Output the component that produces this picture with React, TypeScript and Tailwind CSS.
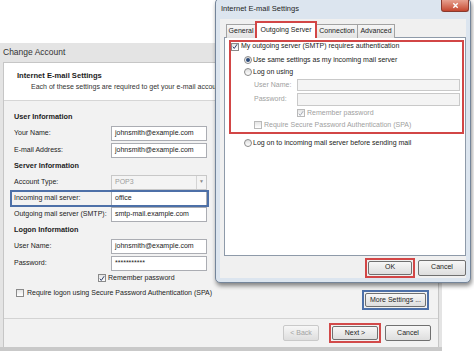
import type { ReactNode } from "react";

function Check({ checked, disabled }: { checked?: boolean; disabled?: boolean }) {
  return (
    <span
      className={`flex h-[8px] w-[8px] shrink-0 items-center justify-center border bg-linear-to-b from-[#e4e4e4] to-white ${
        disabled ? "border-[#b9b9b9]" : "border-[#8a8a8a]"
      }`}
    >
      {checked && (
        <svg viewBox="0 0 8 8" className="h-[7px] w-[7px]">
          <path
            d="M1.2 4.2 L3 6.6 L6.8 1"
            fill="none"
            stroke={disabled ? "#a3aab5" : "#2a3d68"}
            strokeWidth="1.3"
          />
        </svg>
      )}
    </span>
  );
}

function Radio({ on }: { on?: boolean }) {
  return (
    <span className="flex h-[8px] w-[8px] shrink-0 items-center justify-center rounded-full border border-[#8a8a8a] bg-linear-to-b from-[#dedede] to-white">
      {on && <span className="h-[4px] w-[4px] rounded-full bg-[#2b4a78]" />}
    </span>
  );
}

function Btn({ children, className }: { children: ReactNode; className: string }) {
  return (
    <div
      className={`flex items-center justify-center rounded-[2px] border border-[#707070] bg-linear-to-b from-[#f7f7f7] to-[#dedede] text-[7px] text-[#1e1e1e] ${className}`}
    >
      {children}
    </div>
  );
}

function Field({ label, value, h = "h-[17px]" }: { label: string; value: string; h?: string }) {
  return (
    <div className={`flex items-center ${h}`}>
      <span className="w-[97px] shrink-0">{label}</span>
      <div className="flex h-[15px] w-[96px] items-center border border-[#abadb3] bg-white pl-[3px] text-[7px]">
        {value}
      </div>
    </div>
  );
}

function Heading({ children, h }: { children: ReactNode; h: string }) {
  return <div className={`flex items-center font-bold text-[7.3px] ${h}`}>{children}</div>;
}

export default function App() {
  return (
    <div
      className="relative h-[351px] w-[474px] overflow-hidden bg-white text-[7px] text-[#222]"
      style={{ fontFamily: '"Liberation Sans", Arial, sans-serif' }}
    >
      {/* Change Account window */}
      <div className="absolute left-0 top-[43px] flex h-[308px] w-[442px] flex-col bg-[#e4e4e4]">
        <div className="flex h-[19px] items-center pl-[3px] text-[8.5px] text-[#333]">Change Account</div>
        <div className="mx-[3px] flex flex-1 flex-col border-l border-r border-t border-[#c6c6c6] bg-[#f2f2f2]">
          <div className="flex h-[38px] flex-col justify-center border-b border-[#d6d6d6] bg-white pl-[13px]">
            <div className="text-[7.6px] font-bold text-[#1c1c1c]">Internet E-mail Settings</div>
            <div className="pl-[14px] pt-[1px] text-[7px] text-[#333]">
              Each of these settings are required to get your e-mail account working.
            </div>
          </div>

          <div className="flex flex-col pl-[10px] pt-[8px]">
            <Heading h="h-[16px]">User Information</Heading>
            <Field label="Your Name:" value="johnsmith@example.com" />
            <Field label="E-mail Address:" value="johnsmith@example.com" />
            <Heading h="h-[15px]">Server Information</Heading>
            <div className="flex h-[16px] items-center">
              <span className="w-[97px] shrink-0">Account Type:</span>
              <div className="flex h-[15px] w-[96px] items-center justify-between border border-[#c8c8c8] bg-[#f4f4f4] pl-[3px] text-[#9d9d9d]">
                <span>POP3</span>
                <span className="flex h-[13px] w-[10px] items-center justify-center border-l border-[#d4d4d4] text-[5px] text-[#8a8a8a]">
                  ▼
                </span>
              </div>
            </div>
            <div className="relative">
              <Field label="Incoming mail server:" value="office" h="h-[16px]" />
              <div className="absolute -left-[4px] top-0 h-[17px] w-[199px] border-2 border-[#4d70a8]" />
            </div>
            <Field label="Outgoing mail server (SMTP):" value="smtp-mail.example.com" h="h-[16px]" />
            <Heading h="h-[16px]">Logon Information</Heading>
            <Field label="User Name:" value="johnsmith@example.com" />
            <Field label="Password:" value="***********" />
            <div className="flex h-[12px] items-center gap-[2px] pl-[84px]">
              <Check checked />
              <span>Remember password</span>
            </div>
            <div className="flex h-[24px] items-start justify-between pr-[9px]">
              <div className="mt-[4px] flex h-[10px] items-center gap-[3px] pl-[2px]">
                <Check />
                <span>Require logon using Secure Password Authentication (SPA)</span>
              </div>
              <div className="mt-[6px] border-2 border-[#4d70a8] p-[1px]">
                <Btn className="h-[14px] w-[61px]">More Settings ...</Btn>
              </div>
            </div>
          </div>

          <div className="flex-1" />
          <div className="flex h-[29px] items-center justify-end border-t border-[#d3d3d3] pr-[7px]">
            <Btn className="h-[16px] w-[36px] border-[#c9c9c9] text-[#a3a3a3]">&lt; Back</Btn>
            <div className="ml-[10px] border-2 border-[#d24a4a] p-[1px]">
              <Btn className="h-[14px] w-[46px]">Next &gt;</Btn>
            </div>
            <Btn className="ml-[4px] h-[16px] w-[46px]">Cancel</Btn>
          </div>
        </div>
        <div className="h-[4px] bg-[#c9c9c9]" />
      </div>

      {/* Internet E-mail Settings dialog */}
      <div className="absolute left-[215px] top-[-2px] flex h-[285px] w-[256px] flex-col rounded-[5px] border border-[#74859a] bg-[#dce5ef] shadow-[1px_3px_4px_rgba(0,0,0,0.45)]">
        <div className="relative flex h-[20px] items-center pl-[5px] text-[7.5px] text-[#1e1e1e]">
          Internet E-mail Settings
          <div className="absolute right-[1px] top-0 flex h-[13px] w-[28px] items-center justify-center rounded-b-[3px] border border-t-0 border-[#8a3a2e] bg-linear-to-b from-[#e9a898] to-[#c4462f]">
            <svg viewBox="0 0 8 8" className="h-[7px] w-[7px]">
              <path d="M1.5 1.5 L6.5 6.5 M6.5 1.5 L1.5 6.5" stroke="white" strokeWidth="1.6" />
            </svg>
          </div>
        </div>

        <div className="mx-[4px] mb-[4px] flex flex-1 flex-col bg-[#f0f0f0] pl-[4px] pt-[2px]">
          <div className="relative z-10 flex h-[17px] items-end pl-[2px]">
            <div className="flex h-[14px] w-[30px] items-center justify-center border border-b-0 border-[#a3a3a3] bg-linear-to-b from-[#f6f6f6] to-[#e3e3e3]">
              General
            </div>
            <div className="-ml-[1px] flex h-[17px] w-[62px] items-center justify-center border-2 border-b-0 border-[#d24646] bg-white">
              Outgoing Server
            </div>
            <div className="flex h-[14px] w-[41px] items-center justify-center border border-b-0 border-l-0 border-[#a3a3a3] bg-linear-to-b from-[#f6f6f6] to-[#e3e3e3]">
              Connection
            </div>
            <div className="flex h-[14px] w-[37px] items-center justify-center border border-b-0 border-l-0 border-[#a3a3a3] bg-linear-to-b from-[#f6f6f6] to-[#e3e3e3]">
              Advanced
            </div>
          </div>

          <div className="-mt-[1px] flex h-[219px] flex-col border border-[#8e9aa9] bg-white">
            <div className="ml-[4px] mr-[1px] mt-[2px] flex h-[94px] flex-col border-2 border-[#d24646] pl-[0px]">
              <div className="flex h-[9px] items-center gap-[2px]">
                <Check checked />
                <span>My outgoing server (SMTP) requires authentication</span>
              </div>
              <div className="mt-[3px] flex h-[12px] items-center gap-[1px] pl-[13px]">
                <Radio on />
                <span>Use same settings as my incoming mail server</span>
              </div>
              <div className="flex h-[12px] items-center gap-[1px] pl-[13px]">
                <Radio />
                <span>Log on using</span>
              </div>
              <div className="mt-[1px] flex h-[12px] items-center pl-[23px] text-[#a0a0a0]">
                <span className="w-[43px] shrink-0">User Name:</span>
                <div className="h-[12px] w-[163px] border border-[#c9c9c9] bg-[#f4f4f4]" />
              </div>
              <div className="mt-[2px] flex h-[13px] items-center pl-[23px] text-[#a0a0a0]">
                <span className="w-[43px] shrink-0">Password:</span>
                <div className="h-[13px] w-[163px] border border-[#c9c9c9] bg-[#f4f4f4]" />
              </div>
              <div className="mt-[1px] flex h-[12px] items-center gap-[2px] pl-[66px] text-[#a0a0a0]">
                <Check checked disabled />
                <span>Remember password</span>
              </div>
              <div className="flex h-[12px] items-center gap-[2px] pl-[23px] text-[#a0a0a0]">
                <Check disabled />
                <span>Require Secure Password Authentication (SPA)</span>
              </div>
            </div>
            <div className="mt-[4px] flex h-[10px] items-center gap-[1px] pl-[19px]">
              <Radio />
              <span>Log on to incoming mail server before sending mail</span>
            </div>
          </div>

          <div className="mt-[2px] flex h-[19px] items-center justify-end">
            <div className="border-2 border-[#d24646] p-[1px]">
              <Btn className="h-[14px] w-[44px] border-[#3c7fb1] from-[#eaf6fd] to-[#bee6fd]">OK</Btn>
            </div>
            <Btn className="ml-[3px] h-[16px] w-[48px]">Cancel</Btn>
          </div>
        </div>
      </div>
    </div>
  );
}
